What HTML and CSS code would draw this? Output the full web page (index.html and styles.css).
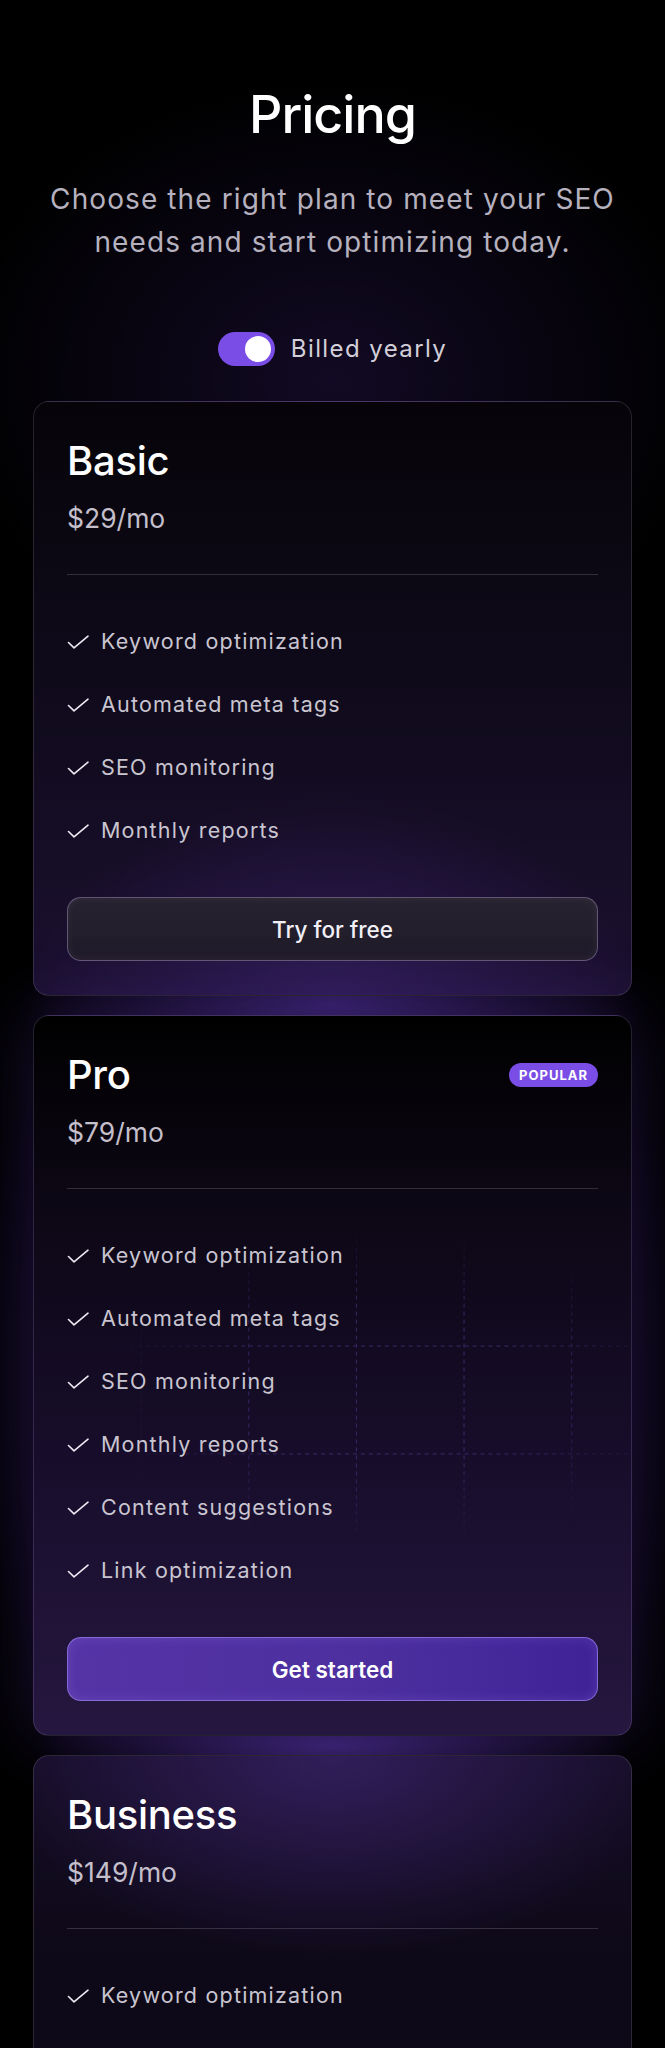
FILE: index.html
```html
<!DOCTYPE html>
<html lang="en">
  <head>
    <meta charset="utf-8">
    <meta name="viewport" content="width=device-width, initial-scale=1.0">
    <title>Pricing</title>
    <link rel="stylesheet" href="styles.css">
  </head>
  <body>
    <section class="pricing">
      <h1 class="pricing-title">Pricing</h1>
      <p class="pricing-subtitle">Choose the right plan to meet your SEO needs and start optimizing today.</p>

      <div class="billing-toggle">
        <span class="switch on"><span class="switch-knob"></span></span>
        <span class="billing-label">Billed yearly</span>
      </div>

      <div class="plans">
        <!-- Basic -->
        <div class="plan plan-basic">
          <div class="plan-head">
            <h2 class="plan-name">Basic</h2>
          </div>
          <div class="plan-price">$29/mo</div>
          <hr class="plan-divider">
          <ul class="plan-features">
            <li><svg class="check" viewBox="0 0 22 14"><polyline points="1.5,7.5 7,12.8 21,1.2"/></svg>Keyword optimization</li>
            <li><svg class="check" viewBox="0 0 22 14"><polyline points="1.5,7.5 7,12.8 21,1.2"/></svg>Automated meta tags</li>
            <li><svg class="check" viewBox="0 0 22 14"><polyline points="1.5,7.5 7,12.8 21,1.2"/></svg>SEO monitoring</li>
            <li><svg class="check" viewBox="0 0 22 14"><polyline points="1.5,7.5 7,12.8 21,1.2"/></svg>Monthly reports</li>
          </ul>
          <button class="plan-button">Try for free</button>
        </div>

        <!-- Pro -->
        <div class="plan plan-pro">
          <svg class="plan-grid" viewBox="0 0 599 720" preserveAspectRatio="none">
            <g stroke="#3a2a6a" stroke-width="1" stroke-dasharray="4 4">
              <line x1="107.5" y1="200" x2="107.5" y2="520"/>
              <line x1="215.5" y1="200" x2="215.5" y2="520"/>
              <line x1="323.5" y1="200" x2="323.5" y2="520"/>
              <line x1="431.5" y1="200" x2="431.5" y2="520"/>
              <line x1="539.5" y1="200" x2="539.5" y2="520"/>
              <line x1="0" y1="330.5" x2="599" y2="330.5"/>
              <line x1="0" y1="438.5" x2="599" y2="438.5"/>
            </g>
          </svg>
          <div class="plan-head">
            <h2 class="plan-name">Pro</h2>
            <span class="badge">Popular</span>
          </div>
          <div class="plan-price">$79/mo</div>
          <hr class="plan-divider">
          <ul class="plan-features">
            <li><svg class="check" viewBox="0 0 22 14"><polyline points="1.5,7.5 7,12.8 21,1.2"/></svg>Keyword optimization</li>
            <li><svg class="check" viewBox="0 0 22 14"><polyline points="1.5,7.5 7,12.8 21,1.2"/></svg>Automated meta tags</li>
            <li><svg class="check" viewBox="0 0 22 14"><polyline points="1.5,7.5 7,12.8 21,1.2"/></svg>SEO monitoring</li>
            <li><svg class="check" viewBox="0 0 22 14"><polyline points="1.5,7.5 7,12.8 21,1.2"/></svg>Monthly reports</li>
            <li><svg class="check" viewBox="0 0 22 14"><polyline points="1.5,7.5 7,12.8 21,1.2"/></svg>Content suggestions</li>
            <li><svg class="check" viewBox="0 0 22 14"><polyline points="1.5,7.5 7,12.8 21,1.2"/></svg>Link optimization</li>
          </ul>
          <button class="plan-button primary">Get started</button>
        </div>

        <!-- Business -->
        <div class="plan plan-business">
          <div class="plan-head">
            <h2 class="plan-name">Business</h2>
          </div>
          <div class="plan-price">$149/mo</div>
          <hr class="plan-divider">
          <ul class="plan-features">
            <li><svg class="check" viewBox="0 0 22 14"><polyline points="1.5,7.5 7,12.8 21,1.2"/></svg>Keyword optimization</li>
          </ul>
        </div>
      </div>
    </section>
  </body>
</html>
```

FILE: styles.css
```css
* {
  box-sizing: border-box;
}
body {
  margin: 0;
  padding: 0;
  font-family: Inter, "Noto Sans", sans-serif;
  color: #fff;
  background:
    radial-gradient(ellipse 320px 90px at 50% 1005px, rgba(88, 52, 170, 0.55), transparent),
    radial-gradient(ellipse 300px 60px at 50% 1746px, rgba(88, 52, 170, 0.6), transparent),
    radial-gradient(ellipse 420px 420px at 50% 1380px, rgba(70, 40, 140, 0.35), transparent),
    radial-gradient(ellipse 380px 300px at 50% 380px, rgba(40, 22, 80, 0.45), transparent),
    #000;
  min-height: 2048px;
}
.pricing {
  padding: 83px 33px 0;
}
.pricing-title {
  margin: 0;
  text-align: center;
  font-size: 52px;
  line-height: 64px;
  font-weight: 500;
  letter-spacing: -1px;
}
.pricing-subtitle {
  margin: 31px auto 0;
  max-width: 599px;
  text-align: center;
  font-size: 28px;
  line-height: 43px;
  letter-spacing: 1.1px;
  color: #b6b1be;
}
.billing-toggle {
  margin-top: 68px;
  display: flex;
  justify-content: center;
  align-items: center;
  gap: 16px;
}
.switch {
  width: 57px;
  height: 34px;
  border-radius: 17px;
  background: #7a4de6;
  padding: 4px;
  display: flex;
  justify-content: flex-end;
}
.switch-knob {
  width: 26px;
  height: 26px;
  border-radius: 50%;
  background: #fff;
}
.billing-label {
  font-size: 24px;
  line-height: 34px;
  letter-spacing: 1.4px;
  color: #d3cfd9;
}
.plans {
  margin-top: 35px;
  display: flex;
  flex-direction: column;
  gap: 19px;
}
.plan {
  position: relative;
  border: 1px solid rgba(255, 255, 255, 0.13);
  border-radius: 16px;
  padding: 33px 33px 34px;
  overflow: hidden;
}
.plan-basic {
  background:
    radial-gradient(ellipse 300px 200px at 50% 100%, rgba(60, 34, 110, 0.6), transparent),
    linear-gradient(180deg, #060409 0%, #0f0a1a 45%, #1b1030 100%);
}
.plan-pro {
  background: linear-gradient(180deg, #000 0%, #0c0714 25%, #170d2a 60%, #25173f 100%);
  border-color: rgba(180, 160, 230, 0.2);
  box-shadow: 0 0 70px rgba(80, 45, 160, 0.35);
}
.plan-business {
  background:
    radial-gradient(ellipse 340px 200px at 50% 0%, rgba(56, 34, 104, 0.8), transparent),
    linear-gradient(180deg, #150d26 0%, #0e0918 50%, #0c0816 100%);
  padding-bottom: 0;
  height: 400px;
}
.plan-grid {
  position: absolute;
  left: 0;
  top: 0;
  width: 100%;
  height: 100%;
  -webkit-mask-image: radial-gradient(ellipse 300px 170px at 60% 52%, #000 45%, transparent 100%);
  mask-image: radial-gradient(ellipse 300px 170px at 60% 52%, #000 45%, transparent 100%);
}
.plan > *:not(.plan-grid) {
  position: relative;
}
.plan-head {
  display: flex;
  justify-content: space-between;
  align-items: center;
}
.plan-name {
  margin: 0;
  font-size: 40px;
  line-height: 52px;
  font-weight: 500;
  letter-spacing: -0.3px;
}
.badge {
  background: #7a4de6;
  color: #fff;
  font-size: 13px;
  font-weight: 700;
  letter-spacing: 1px;
  text-transform: uppercase;
  line-height: 24px;
  padding: 0 10px;
  border-radius: 12px;
}
.plan-price {
  margin-top: 11px;
  font-size: 26.5px;
  line-height: 40px;
  color: #c4bfcb;
}
.plan-divider {
  margin: 36px 0 0;
  border: none;
  height: 1px;
  background: rgba(255, 255, 255, 0.16);
}
.plan-features {
  list-style: none;
  margin: 34px 0 36px;
  padding: 0;
}
.plan-features li {
  display: flex;
  align-items: center;
  gap: 12px;
  height: 63px;
  font-size: 21.5px;
  letter-spacing: 1.2px;
  color: #c9c5d0;
}
.check {
  width: 22px;
  height: 14px;
  margin-top: 3px;
  fill: none;
  stroke: #eeeaf3;
  stroke-width: 1.6;
  stroke-linecap: round;
  stroke-linejoin: round;
}
.plan-button {
  display: block;
  width: 100%;
  height: 64px;
  border-radius: 14px;
  border: 1px solid rgba(150, 135, 175, 0.55);
  background: linear-gradient(180deg, #272230 0%, #201b29 100%);
  box-shadow: inset 0 0 10px rgba(255, 255, 255, 0.06);
  color: #f2f0f6;
  font-family: inherit;
  font-size: 22.5px;
  font-weight: 500;
  cursor: pointer;
}
.plan-button.primary {
  border-color: rgba(150, 120, 230, 0.8);
  background: linear-gradient(90deg, #5534a6 0%, #4d2f9f 55%, #3f2396 100%);
  box-shadow: inset 0 0 12px rgba(170, 140, 255, 0.2);
  color: #fff;
  font-weight: 600;
}
```
